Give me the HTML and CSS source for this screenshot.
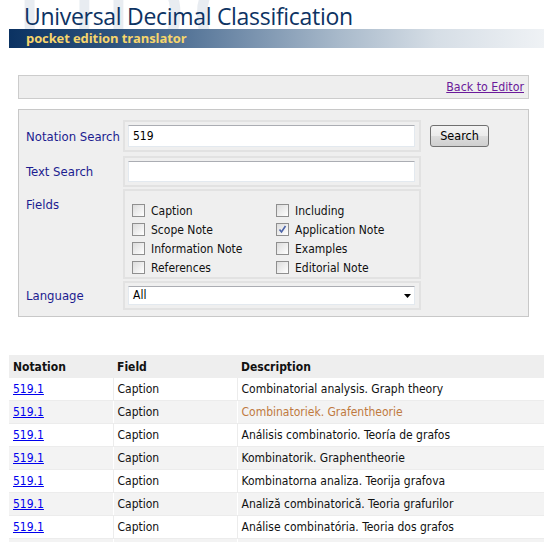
FILE: index.html
```html
<!DOCTYPE html>
<html>
<head>
<meta charset="utf-8">
<title>UDC pocket edition translator</title>
<link rel="stylesheet" href="styles.css">
</head>
<body>
<div class="header">
  <h1 class="title">Universal Decimal Classification</h1>
  <div class="band"><span class="subtitle">pocket edition translator</span></div>
</div>

<div class="topbar"><a class="back" href="#">Back to Editor</a></div>

<div class="panel">
  <div class="form-grid">
    <div class="label">Notation Search</div>
    <div class="cell"><div class="input">519</div></div>
    <div class="btn-wrap"><span class="button">Search</span></div>

    <div class="label row2">Text Search</div>
    <div class="cell row2"><div class="input short"></div></div>
    <div class="row2"></div>

    <div class="label label-top">Fields</div>
    <div class="cell fields">
      <div class="check"><span class="box"></span>Caption</div>
      <div class="check"><span class="box"></span>Including</div>
      <div class="check"><span class="box"></span>Scope Note</div>
      <div class="check"><span class="box"><svg width="11" height="11" viewBox="0 0 11 11"><path d="M2.5 5.5 L4.5 8 L8.5 2" fill="none" stroke="#4b63a8" stroke-width="1.6"/></svg></span>Application Note</div>
      <div class="check"><span class="box"></span>Information Note</div>
      <div class="check"><span class="box"></span>Examples</div>
      <div class="check"><span class="box"></span>References</div>
      <div class="check"><span class="box"></span>Editorial Note</div>
    </div>
    <div></div>

    <div class="label">Language</div>
    <div class="cell"><div class="select"><span>All</span><svg width="7" height="4" viewBox="0 0 7 4"><path d="M0 0 H7 L3.5 4 Z" fill="#000"/></svg></div></div>
    <div></div>
  </div>
</div>

<table class="results">
  <thead>
    <tr><th class="c1">Notation</th><th class="c2">Field</th><th>Description</th></tr>
  </thead>
  <tbody>
    <tr><td><a href="#">519.1</a></td><td>Caption</td><td>Combinatorial analysis. Graph theory</td></tr>
    <tr class="alt"><td><a href="#">519.1</a></td><td>Caption</td><td class="hl">Combinatoriek. Grafentheorie</td></tr>
    <tr><td><a href="#">519.1</a></td><td>Caption</td><td>Análisis combinatorio. Teoría de grafos</td></tr>
    <tr class="alt"><td><a href="#">519.1</a></td><td>Caption</td><td>Kombinatorik. Graphentheorie</td></tr>
    <tr><td><a href="#">519.1</a></td><td>Caption</td><td>Kombinatorna analiza. Teorija grafova</td></tr>
    <tr class="alt"><td><a href="#">519.1</a></td><td>Caption</td><td>Analiză combinatorică. Teoria grafurilor</td></tr>
    <tr><td><a href="#">519.1</a></td><td>Caption</td><td>Análise combinatória. Teoria dos grafos</td></tr>
    <tr class="alt"><td><a href="#">519.1</a></td><td>Caption</td><td>Combinatorial analysis</td></tr>
  </tbody>
</table>
</body>
</html>
```

FILE: styles.css
```css
html, body {
  margin: 0;
  padding: 0;
  background: #ffffff;
  overflow-x: hidden;
}
body {
  font-family: "DejaVu Sans Condensed", "DejaVu Sans", sans-serif;
  font-size: 12px;
  color: #111111;
}

.header {
  position: relative;
  height: 48px;
  overflow: hidden;
}
.header::before {
  content: "UDC";
  position: absolute;
  left: 14px;
  top: -48px;
  font-family: "Open Sans", sans-serif;
  font-size: 118px;
  line-height: 118px;
  letter-spacing: 2px;
  color: #e8ecf1;
  z-index: 0;
}
.title {
  position: relative;
  z-index: 1;
  margin: 0;
  height: 26px;
  padding: 3px 0 0 24px;
  font-family: "Open Sans", sans-serif;
  font-weight: normal;
  font-size: 23px;
  line-height: 26px;
  color: #0d3363;
  letter-spacing: -0.3px;
}
.band {
  position: relative;
  z-index: 1;
  margin-left: 9px;
  height: 19px;
  background: linear-gradient(to right, #0b3262 0%, #2f557f 20%, #6f8aa8 42%, #a9bacb 62%, #d6dee6 80%, #eff2f5 100%);
}
.subtitle {
  display: block;
  padding-left: 17px;
  font-family: "Open Sans", sans-serif;
  font-weight: 700;
  font-size: 13px;
  line-height: 19px;
  letter-spacing: -0.1px;
  color: #f6d56c;
}

.topbar {
  margin: 27px 15px 0 18px;
  height: 22px;
  border: 1px solid #cccccc;
  background: #eeeeee;
  text-align: right;
  padding-right: 4px;
  line-height: 22px;
}
.back {
  font-size: 12.3px;
  color: #6b1a9a;
  text-decoration: underline;
}

.panel {
  margin: 10px 15px 0 18px;
  border: 1px solid #c8c8c8;
  background: #efefef;
  padding: 10px 0 6px 7px;
}
.form-grid {
  display: grid;
  grid-template-columns: 97px 298px auto;
  row-gap: 2px;
}
.row2 {
  margin-top: 2px;
}
.label {
  font-size: 13px;
  color: #1c1c90;
  display: flex;
  align-items: center;
}
.label-top {
  align-items: flex-start;
  padding-top: 8px;
}
.cell {
  border: 2px solid #e2e2e2;
  padding: 3px 4px 3px 3px;
}
.input {
  height: 20px;
  background: #ffffff;
  border: 1px solid #e3e9ef;
  border-top-color: #abadb3;
  padding: 0 4px;
  line-height: 20px;
  color: #000;
}
.input.short {
  height: 19px;
}
.btn-wrap {
  display: flex;
  align-items: center;
  padding-left: 9px;
}
.button {
  display: block;
  width: 57px;
  height: 20px;
  border: 1px solid #707070;
  border-radius: 3px;
  background: linear-gradient(#f4f4f4 0%, #ebebeb 50%, #dddddd 51%, #cfcfcf 100%);
  text-align: center;
  line-height: 20px;
  font-size: 12.5px;
  color: #000;
}

.fields {
  display: grid;
  grid-template-columns: 144px auto;
  grid-auto-rows: 19px;
  padding: 10px 0 0 7px;
}
.check {
  display: flex;
  align-items: center;
  gap: 6px;
  color: #111;
}
.box {
  width: 11px;
  height: 11px;
  border: 1px solid #8f8f8f;
  background: linear-gradient(135deg, #dcdcdc 0%, #f4f4f4 70%, #ffffff 100%);
  display: flex;
  align-items: center;
  justify-content: center;
}

.select {
  height: 17px;
  background: #ffffff;
  border: 1px solid #e3e9ef;
  border-top-color: #abadb3;
  padding: 0 3px 0 4px;
  line-height: 17px;
  display: flex;
  justify-content: space-between;
  align-items: center;
  color: #000;
}

.results {
  margin: 38px 0 0 9px;
  width: calc(100% - 9px);
  border-collapse: collapse;
}
.results th {
  background: #eeeeee;
  height: 23px;
  padding: 0 4px;
  text-align: left;
  font-weight: bold;
}
.results th.c1 { width: 96px; }
.results th.c2 { width: 116px; }
.results td {
  height: 22px;
  padding: 0 4px;
  border-bottom: 1px solid #ececec;
  border-left: 1px solid #ececec;
  background: #ffffff;
}
.results td:first-child { border-left: none; }
.results tr.alt td {
  background: #f3f3f3;
  border-left-color: #ffffff;
}
.results a { color: #0000ee; }
.results td.hl { color: #c07a40; }
```
